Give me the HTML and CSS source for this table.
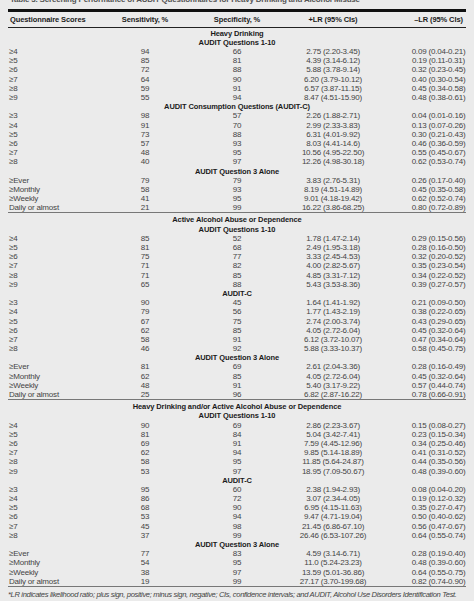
FILE: index.html
```html
<!DOCTYPE html>
<html lang="en">
<head>
<meta charset="utf-8">
<title>AUDIT screening table</title>
<link rel="stylesheet" href="styles.css">
</head>
<body>
<div class="page">
  <div class="caption">Table 3. Screening Performance of AUDIT Questionnaires for Heavy Drinking and Alcohol Misuse*</div>
  <div class="tbl">
    <div class="row head">
      <span>Questionnaire Scores</span><span>Sensitivity, %</span><span>Specificity, %</span><span>+LR (95% CIs)</span><span>–LR (95% CIs)</span>
    </div>

    <div class="section">
      <div class="sec-title">Heavy Drinking</div>
      <div class="sec-title">AUDIT Questions 1-10</div>
      <div class="row"><span>≥4</span><span>94</span><span>66</span><span>2.75 (2.20-3.45)</span><span>0.09 (0.04-0.21)</span></div>
      <div class="row"><span>≥5</span><span>85</span><span>81</span><span>4.39 (3.14-6.12)</span><span>0.19 (0.11-0.31)</span></div>
      <div class="row"><span>≥6</span><span>72</span><span>88</span><span>5.88 (3.78-9.14)</span><span>0.32 (0.23-0.45)</span></div>
      <div class="row"><span>≥7</span><span>64</span><span>90</span><span>6.20 (3.79-10.12)</span><span>0.40 (0.30-0.54)</span></div>
      <div class="row"><span>≥8</span><span>59</span><span>91</span><span>6.57 (3.87-11.15)</span><span>0.45 (0.34-0.58)</span></div>
      <div class="row"><span>≥9</span><span>55</span><span>94</span><span>8.47 (4.51-15.90)</span><span>0.48 (0.38-0.61)</span></div>
      <div class="sec-title">AUDIT Consumption Questions (AUDIT-C)</div>
      <div class="row"><span>≥3</span><span>98</span><span>57</span><span>2.26 (1.88-2.71)</span><span>0.04 (0.01-0.16)</span></div>
      <div class="row"><span>≥4</span><span>91</span><span>70</span><span>2.99 (2.33-3.83)</span><span>0.13 (0.07-0.26)</span></div>
      <div class="row"><span>≥5</span><span>73</span><span>88</span><span>6.31 (4.01-9.92)</span><span>0.30 (0.21-0.43)</span></div>
      <div class="row"><span>≥6</span><span>57</span><span>93</span><span>8.03 (4.41-14.6)</span><span>0.46 (0.36-0.59)</span></div>
      <div class="row"><span>≥7</span><span>48</span><span>95</span><span>10.56 (4.95-22.50)</span><span>0.55 (0.45-0.67)</span></div>
      <div class="row"><span>≥8</span><span>40</span><span>97</span><span>12.26 (4.98-30.18)</span><span>0.62 (0.53-0.74)</span></div>
      <div class="sec-title">AUDIT Question 3 Alone</div>
      <div class="row"><span>≥Ever</span><span>79</span><span>79</span><span>3.83 (2.76-5.31)</span><span>0.26 (0.17-0.40)</span></div>
      <div class="row"><span>≥Monthly</span><span>58</span><span>93</span><span>8.19 (4.51-14.89)</span><span>0.45 (0.35-0.58)</span></div>
      <div class="row"><span>≥Weekly</span><span>41</span><span>95</span><span>9.01 (4.18-19.42)</span><span>0.62 (0.52-0.74)</span></div>
      <div class="row"><span>Daily or almost</span><span>21</span><span>99</span><span>16.22 (3.86-68.25)</span><span>0.80 (0.72-0.89)</span></div>
    </div>

    <div class="section">
      <div class="sec-title">Active Alcohol Abuse or Dependence</div>
      <div class="sec-title">AUDIT Questions 1-10</div>
      <div class="row"><span>≥4</span><span>85</span><span>52</span><span>1.78 (1.47-2.14)</span><span>0.29 (0.15-0.56)</span></div>
      <div class="row"><span>≥5</span><span>81</span><span>68</span><span>2.49 (1.95-3.18)</span><span>0.28 (0.16-0.50)</span></div>
      <div class="row"><span>≥6</span><span>75</span><span>77</span><span>3.33 (2.45-4.53)</span><span>0.32 (0.20-0.52)</span></div>
      <div class="row"><span>≥7</span><span>71</span><span>82</span><span>4.00 (2.82-5.67)</span><span>0.35 (0.23-0.54)</span></div>
      <div class="row"><span>≥8</span><span>71</span><span>85</span><span>4.85 (3.31-7.12)</span><span>0.34 (0.22-0.52)</span></div>
      <div class="row"><span>≥9</span><span>65</span><span>88</span><span>5.43 (3.53-8.36)</span><span>0.39 (0.27-0.57)</span></div>
      <div class="sec-title">AUDIT-C</div>
      <div class="row"><span>≥3</span><span>90</span><span>45</span><span>1.64 (1.41-1.92)</span><span>0.21 (0.09-0.50)</span></div>
      <div class="row"><span>≥4</span><span>79</span><span>56</span><span>1.77 (1.43-2.19)</span><span>0.38 (0.22-0.65)</span></div>
      <div class="row"><span>≥5</span><span>67</span><span>75</span><span>2.74 (2.00-3.74)</span><span>0.43 (0.29-0.65)</span></div>
      <div class="row"><span>≥6</span><span>62</span><span>85</span><span>4.05 (2.72-6.04)</span><span>0.45 (0.32-0.64)</span></div>
      <div class="row"><span>≥7</span><span>58</span><span>91</span><span>6.12 (3.72-10.07)</span><span>0.47 (0.34-0.64)</span></div>
      <div class="row"><span>≥8</span><span>46</span><span>92</span><span>5.88 (3.33-10.37)</span><span>0.58 (0.45-0.75)</span></div>
      <div class="sec-title">AUDIT Question 3 Alone</div>
      <div class="row"><span>≥Ever</span><span>81</span><span>69</span><span>2.61 (2.04-3.36)</span><span>0.28 (0.16-0.49)</span></div>
      <div class="row"><span>≥Monthly</span><span>62</span><span>85</span><span>4.05 (2.72-6.04)</span><span>0.45 (0.32-0.64)</span></div>
      <div class="row"><span>≥Weekly</span><span>48</span><span>91</span><span>5.40 (3.17-9.22)</span><span>0.57 (0.44-0.74)</span></div>
      <div class="row"><span>Daily or almost</span><span>25</span><span>96</span><span>6.82 (2.87-16.22)</span><span>0.78 (0.66-0.91)</span></div>
    </div>

    <div class="section">
      <div class="sec-title">Heavy Drinking and/or Active Alcohol Abuse or Dependence</div>
      <div class="sec-title">AUDIT Questions 1-10</div>
      <div class="row"><span>≥4</span><span>90</span><span>69</span><span>2.86 (2.23-3.67)</span><span>0.15 (0.08-0.27)</span></div>
      <div class="row"><span>≥5</span><span>81</span><span>84</span><span>5.04 (3.42-7.41)</span><span>0.23 (0.15-0.34)</span></div>
      <div class="row"><span>≥6</span><span>69</span><span>91</span><span>7.59 (4.45-12.96)</span><span>0.34 (0.25-0.46)</span></div>
      <div class="row"><span>≥7</span><span>62</span><span>94</span><span>9.85 (5.14-18.89)</span><span>0.41 (0.31-0.52)</span></div>
      <div class="row"><span>≥8</span><span>58</span><span>95</span><span>11.85 (5.64-24.87)</span><span>0.44 (0.35-0.56)</span></div>
      <div class="row"><span>≥9</span><span>53</span><span>97</span><span>18.95 (7.09-50.67)</span><span>0.48 (0.39-0.60)</span></div>
      <div class="sec-title">AUDIT-C</div>
      <div class="row"><span>≥3</span><span>95</span><span>60</span><span>2.38 (1.94-2.93)</span><span>0.08 (0.04-0.20)</span></div>
      <div class="row"><span>≥4</span><span>86</span><span>72</span><span>3.07 (2.34-4.05)</span><span>0.19 (0.12-0.32)</span></div>
      <div class="row"><span>≥5</span><span>68</span><span>90</span><span>6.95 (4.15-11.63)</span><span>0.35 (0.27-0.47)</span></div>
      <div class="row"><span>≥6</span><span>53</span><span>94</span><span>9.47 (4.71-19.04)</span><span>0.50 (0.40-0.62)</span></div>
      <div class="row"><span>≥7</span><span>45</span><span>98</span><span>21.45 (6.86-67.10)</span><span>0.56 (0.47-0.67)</span></div>
      <div class="row"><span>≥8</span><span>37</span><span>99</span><span>26.46 (6.53-107.26)</span><span>0.64 (0.55-0.74)</span></div>
      <div class="sec-title">AUDIT Question 3 Alone</div>
      <div class="row"><span>≥Ever</span><span>77</span><span>83</span><span>4.59 (3.14-6.71)</span><span>0.28 (0.19-0.40)</span></div>
      <div class="row"><span>≥Monthly</span><span>54</span><span>95</span><span>11.0 (5.24-23.23)</span><span>0.48 (0.39-0.60)</span></div>
      <div class="row"><span>≥Weekly</span><span>38</span><span>97</span><span>13.59 (5.01-36.86)</span><span>0.64 (0.55-0.75)</span></div>
      <div class="row"><span>Daily or almost</span><span>19</span><span>99</span><span>27.17 (3.70-199.68)</span><span>0.82 (0.74-0.90)</span></div>
    </div>
  </div>
  <p class="foot">*LR indicates likelihood ratio; plus sign, positive; minus sign, negative; CIs, confidence intervals; and AUDIT, Alcohol Use Disorders Identification Test.</p>
</div>
</body>
</html>
```

FILE: styles.css
```css
html, body {
  margin: 0;
  padding: 0;
  background: #ebebeb;
}

body {
  font-family: "Liberation Sans Narrow", "Liberation Sans", Arial, sans-serif;
  font-stretch: condensed;
  color: #444;
  overflow: hidden;
}

.page {
  width: 474px;
  height: 601px;
  overflow: hidden;
}

.caption {
  margin: -5px 0 0 10px;
  height: 9px;
  font-size: 8px;
  line-height: 9px;
  font-weight: bold;
  letter-spacing: -0.2px;
  color: #555;
  white-space: nowrap;
}

.tbl {
  margin: 5px 8px 0 8px;
  border-top: 3px solid #111;
  border-bottom: 1px solid #777;
}

.row {
  display: grid;
  grid-template-columns: 94px 86px 98px 94px 86px;
  font-size: 8px;
  line-height: 9.2px;
  height: 9.2px;
  letter-spacing: -0.2px;
  white-space: nowrap;
}

.row span {
  text-align: center;
}

.row span:first-child {
  text-align: left;
  padding-left: 1px;
}

.row span:last-child {
  padding-left: 31px;
}

.row.head {
  padding: 2.5px 0 3px;
  border-bottom: 1px solid #222;
  font-size: 7.5px;
  font-weight: bold;
  letter-spacing: -0.1px;
  color: #1a1a1a;
}

.row.head span:first-child {
  padding-left: 2px;
}

.section {
  padding-top: 1px;
}

.section + .section {
  border-top: 1px solid #777;
  padding-top: 2px;
}

.sec-title {
  text-align: center;
  font-size: 7.5px;
  line-height: 9.2px;
  height: 9.2px;
  font-weight: bold;
  letter-spacing: -0.1px;
  color: #1a1a1a;
  white-space: nowrap;
}

.foot {
  margin: 3px 0 0 8px;
  font-size: 7.6px;
  line-height: 9px;
  font-style: italic;
  letter-spacing: -0.35px;
  color: #444;
  white-space: nowrap;
}
```
